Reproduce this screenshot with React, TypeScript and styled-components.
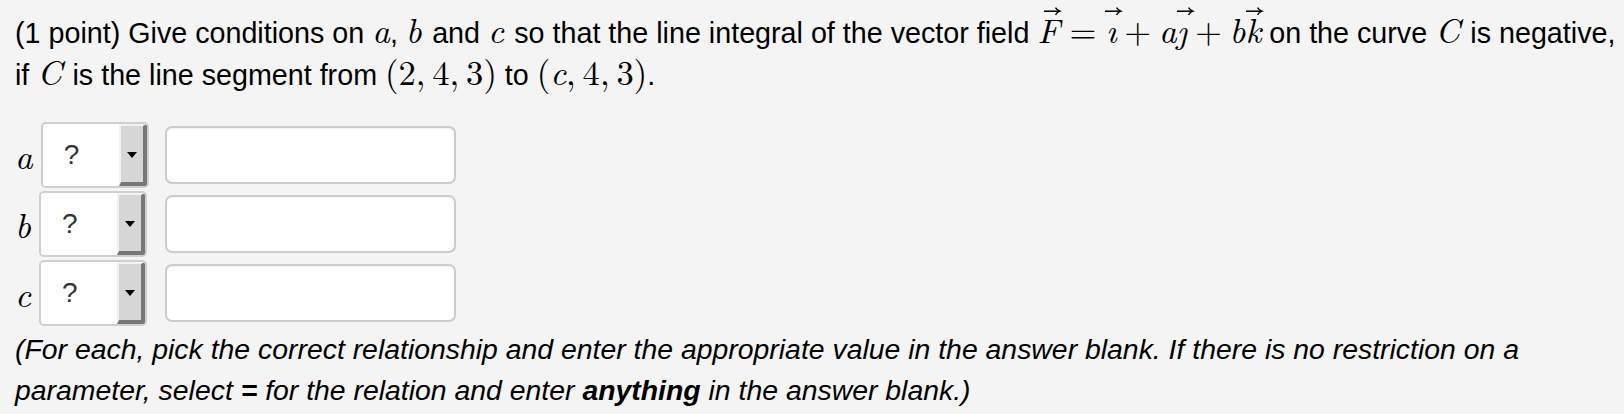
import React from "react";
import styled, { createGlobalStyle } from "styled-components";

const MATH = `"Latin Modern Roman", "Latin Modern Math", "Liberation Serif", serif`;

const Global = createGlobalStyle`
  html, body { margin: 0; padding: 0; background: #f4f4f4; }
  body { font-family: "Liberation Sans", Arial, sans-serif; color: #000; }
`;

const Page = styled.div`
  padding: 12px 0 0 15px;
  font-size: 28.4px;
`;

const Para = styled.p`
  margin: 0;
  font-size: 28.7px;
  line-height: 41px;
  white-space: nowrap;
`;

const Note = styled.p`
  margin: 3px 0 0;
  line-height: 41px;
  white-space: nowrap;
  font-style: italic;
`;

/* math run: italic variable or upright symbols; $ic adds italic correction */
const M = styled.span<{ $up?: boolean; $ic?: boolean }>`
  font-family: ${MATH};
  font-style: ${(p) => (p.$up ? "normal" : "italic")};
  font-size: 34.6px;
  line-height: 1;
  padding-right: ${(p) => (p.$ic ? "0.07em" : "0")};
`;

const Rel = styled.span<{ $sp: number }>`
  font-family: ${MATH};
  font-style: normal;
  font-size: 34.6px;
  line-height: 1;
  padding: 0 ${(p) => p.$sp}em;
`;

const VecWrap = styled.span`
  position: relative;
  display: inline-block;
  line-height: 1;
`;

const Arrow = styled.svg<{ $dx: number }>`
  position: absolute;
  top: -6px;
  left: 50%;
  transform: translateX(calc(-50% + ${(p) => p.$dx}px));
  width: 17px;
  height: 10px;
  overflow: visible;
`;

const Vec: React.FC<{ ch: string; dx?: number }> = ({ ch, dx = 0 }) => (
  <VecWrap>
    <M>{ch}</M>
    <Arrow $dx={dx} viewBox="0 0 17 10">
      <path d="M0.5 5.2 H15.6" stroke="#000" strokeWidth="1.5" fill="none" />
      <path d="M12 1.6 Q13.6 4.2 16.4 5.2 Q13.6 6.2 12 8.8" stroke="#000" strokeWidth="1.4" fill="none" />
    </Arrow>
  </VecWrap>
);

const Rows = styled.div`
  display: grid;
  grid-template-columns: 134px 291px;
  column-gap: 16px;
  row-gap: 3px;
  align-items: center;
  margin-top: 26px;
`;

const LeftCell = styled.div`
  display: flex;
  align-items: center;
`;

const Label = styled.span`
  font-family: ${MATH};
  font-style: italic;
  font-size: 34.6px;
  line-height: 1;
  margin-right: 8px;
`;

const Select = styled.div`
  display: flex;
  width: 108px;
  height: 66px;
  box-sizing: border-box;
  border: 2px solid #cfcfcf;
  border-radius: 5px;
  background: #fff;
  overflow: hidden;
`;

const SelectValue = styled.div`
  flex: 1;
  display: flex;
  align-items: center;
  padding-left: 21px;
  font-size: 28px;
  color: #333;
  background: #fff;
`;

const SelectButton = styled.div`
  width: 28px;
  box-sizing: border-box;
  border-style: solid;
  border-width: 2px 4px 4px 2px;
  border-color: #f2f2f2 #777 #777 #f2f2f2;
  background: #d6d6d6;
  display: flex;
  align-items: center;
  justify-content: center;
`;

const Caret = styled.span`
  width: 0;
  height: 0;
  border-left: 5px solid transparent;
  border-right: 5px solid transparent;
  border-top: 6px solid #000;
  margin-top: 2px;
`;

const Answer = styled.div`
  height: 58px;
  box-sizing: border-box;
  border: 2px solid #cccccc;
  border-radius: 7px;
  background: #fff;
  box-shadow: inset 0 1px 2px rgba(0, 0, 0, 0.06);
`;

const rows = ["a", "b", "c"];

export default function App() {
  return (
    <>
      <Global />
      <Page>
        <Para>
          (1 point) Give conditions on <M>a</M>, <M $ic>b</M> and <M $ic>c</M> so that the line integral of the vector field{" "}
          <Vec ch="F" dx={3} />
          <Rel $sp={0.278}>=</Rel>
          <Vec ch={"\u0131"} dx={2} />
          <Rel $sp={0.222}>+</Rel>
          <M>a</M>
          <Vec ch={"\u0237"} dx={3} />
          <Rel $sp={0.222}>+</Rel>
          <M>b</M>
          <Vec ch="k" dx={1} /> on the curve <M $ic>C</M> is negative,
          <br />
          if <M $ic>C</M> is the line segment from <M $up>(2,&#8201;4,&#8201;3)</M> to{" "}
          <M $up>
            (<i>c</i>,&#8201;4,&#8201;3)
          </M>
          .
        </Para>
        <Rows>
          {rows.map((r) => (
            <React.Fragment key={r}>
              <LeftCell>
                <Label>{r}</Label>
                <Select>
                  <SelectValue>?</SelectValue>
                  <SelectButton>
                    <Caret />
                  </SelectButton>
                </Select>
              </LeftCell>
              <Answer />
            </React.Fragment>
          ))}
        </Rows>
        <Note>
          (For each, pick the correct relationship and enter the appropriate value in the answer blank. If there is no restriction on a
          <br />
          parameter, select <b>=</b> for the relation and enter <b>anything</b> in the answer blank.)
        </Note>
      </Page>
    </>
  );
}
